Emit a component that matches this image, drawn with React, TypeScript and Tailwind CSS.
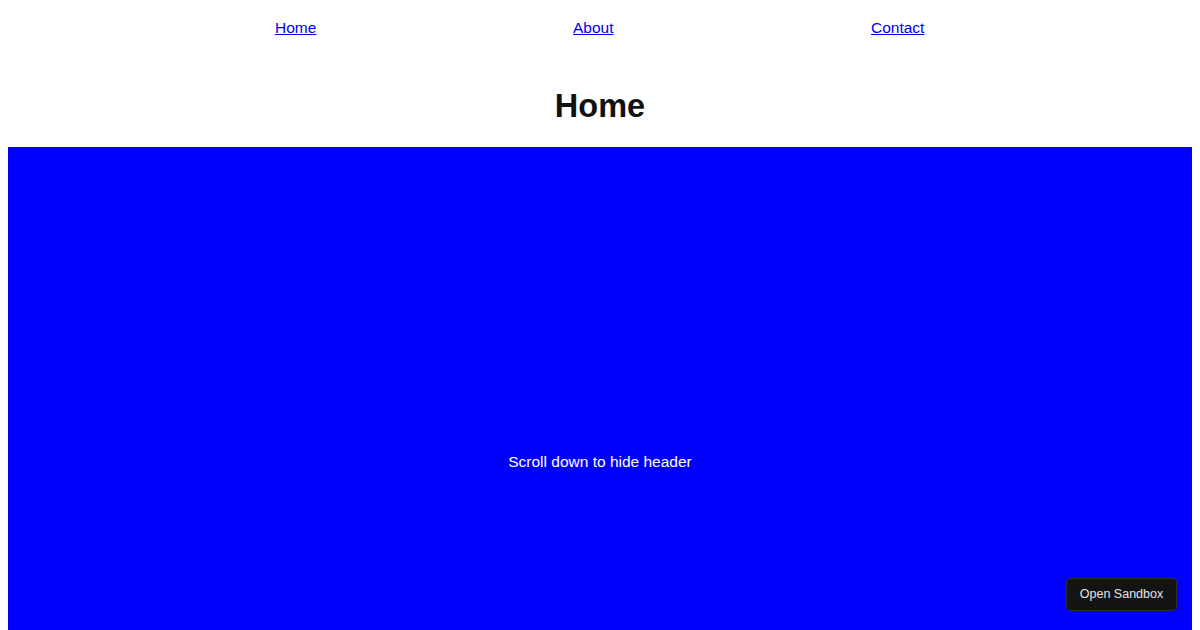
import React from "react";

const links = ["Home", "About", "Contact"];

export default function App() {
  return (
    <div className="bg-white font-['Liberation_Sans',Arial,sans-serif] text-[#111]">
      {/* Header */}
      <nav className="h-[54px] flex items-center pl-[275px] pt-[2px]">
        {links.map((l) => (
          <div key={l} className="w-[298px]">
            <a href="#" className="text-[15.5px] text-[#0000ee] underline">
              {l}
            </a>
          </div>
        ))}
      </nav>
      <div className="h-[93px] flex items-center justify-center pt-[11px]">
        <h1 className="text-[32.5px] font-bold leading-[37px]">Home</h1>
      </div>

      {/* Content */}
      <main className="mx-[8px] h-screen bg-[#0000ff] flex items-center justify-center">
        <p className="text-white text-[15.5px]">Scroll down to hide header</p>
      </main>

      <button className="fixed right-[23px] bottom-[19px] w-[111px] h-[33px] rounded-[4px] bg-[#141414] border border-[#2e2e2e] text-[12.5px] text-[#e6e6e6] flex items-center justify-center">
        Open Sandbox
      </button>
    </div>
  );
}
